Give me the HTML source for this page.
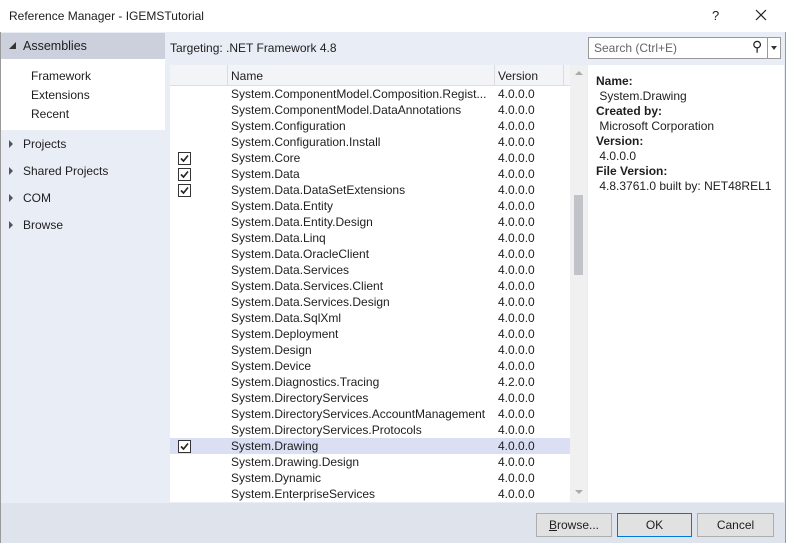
<!DOCTYPE html>
<html><head><style>
body{margin:0;width:786px;height:543px;overflow:hidden;font-family:"Liberation Sans",sans-serif;font-size:12px;color:#1e1e1e;background:#e9edf6;position:relative}
.a{position:absolute}
.title{left:0;top:0;width:786px;height:32px;background:#fff}
.row{position:absolute;left:0;width:400px;height:16px;line-height:16px}
.row span{position:absolute}
.cb{position:absolute;left:8px;top:2px;width:11px;height:11px;border:1px solid #333;background:#fff}
.btn{position:absolute;top:513px;height:22px;border:1px solid #adadad;background:#e1e1e1;text-align:center;line-height:22px;font-size:12px}
.tri{position:absolute;left:9px;width:0;height:0;border-top:4px solid transparent;border-bottom:4px solid transparent;border-left:4px solid #555}
</style></head><body>
<div class="a title"></div>
<div class="a" style="left:9px;top:9px;font-size:12px">Reference Manager - IGEMSTutorial</div>
<div class="a" style="left:712px;top:8px;font-size:13px">?</div>
<svg class="a" style="left:755px;top:9px" width="12" height="12"><path d="M1 1L11 11M11 1L1 11" stroke="#222" stroke-width="1.2"/></svg>
<div class="a" style="left:0;top:32px;width:1px;height:511px;background:#999"></div>
<div class="a" style="left:785px;top:32px;width:1px;height:511px;background:#999"></div>

<div class="a" style="left:1px;top:33px;width:164px;height:26px;background:#ccd0dc"></div>
<div class="a" style="left:9px;top:42px;width:0;height:0;border-left:7px solid transparent;border-bottom:7px solid #333"></div>
<div class="a" style="left:23px;top:39px;font-size:12.5px">Assemblies</div>
<div class="a" style="left:1px;top:59px;width:164px;height:71px;background:#fff"></div>
<div class="a" style="left:31px;top:69px">Framework</div>
<div class="a" style="left:31px;top:88px">Extensions</div>
<div class="a" style="left:31px;top:107px">Recent</div>
<div class="tri" style="top:140px"></div><div class="a" style="left:23px;top:137px">Projects</div>
<div class="tri" style="top:167px"></div><div class="a" style="left:23px;top:164px">Shared Projects</div>
<div class="tri" style="top:194px"></div><div class="a" style="left:23px;top:191px">COM</div>
<div class="tri" style="top:221px"></div><div class="a" style="left:23px;top:218px">Browse</div>

<div class="a" style="left:170px;top:41px">Targeting: .NET Framework 4.8</div>
<div class="a" style="left:588px;top:37px;width:191px;height:20px;border:1px solid #999;background:#fff"></div>
<div class="a" style="left:594px;top:41px;color:#666">Search (Ctrl+E)</div>
<div class="a" style="left:752px;top:38px;font-size:14px;transform:scaleX(-1)">⚲</div>
<div class="a" style="left:767px;top:38px;width:1px;height:20px;background:#999"></div>
<div class="a" style="left:771px;top:46px;border-left:3px solid transparent;border-right:3px solid transparent;border-top:4px solid #333"></div>

<div class="a" style="left:170px;top:65px;width:417px;height:437px;background:#fff;overflow:hidden">
 <div class="a" style="left:0;top:0;width:400px;height:20px;background:#f3f4f7;border-bottom:1px solid #ddd"></div>
 <div class="a" style="left:57px;top:0;width:1px;height:20px;background:#ddd"></div>
 <div class="a" style="left:324px;top:0;width:1px;height:20px;background:#ddd"></div>
 <div class="a" style="left:393px;top:0;width:1px;height:20px;background:#ddd"></div>
 <div class="a" style="left:61px;top:4px">Name</div>
 <div class="a" style="left:328px;top:4px">Version</div>
 <div class="a" style="left:400px;top:0;width:17px;height:437px;background:#f0f0f0"></div>
 <div class="a" style="left:404px;top:130px;width:9px;height:80px;background:#c2c3c9"></div>
 <div class="a" style="left:405px;top:6px;border-left:4px solid transparent;border-right:4px solid transparent;border-bottom:4px solid #aaa"></div>
 <div class="a" style="left:405px;top:425px;border-left:4px solid transparent;border-right:4px solid transparent;border-top:4px solid #aaa"></div>
 <div id="rows"></div>
</div>

<div class="a" style="left:588px;top:65px;width:196px;height:437px;background:#fff"></div>
<div class="a" style="left:596px;top:74px;line-height:15px">
<b>Name:</b><br>&nbsp;System.Drawing<br><b>Created by:</b><br>&nbsp;Microsoft Corporation<br><b>Version:</b><br>&nbsp;4.0.0.0<br><b>File Version:</b><br>&nbsp;4.8.3761.0 built by: NET48REL1</div>

<div class="a" style="left:1px;top:503px;width:784px;height:40px;background:#dfe3ec"></div>
<div class="btn" style="left:536px;width:74px"><u>B</u>rowse...</div>
<div class="btn" style="left:617px;width:73px;border-color:#0078d7">OK</div>
<div class="btn" style="left:697px;width:75px">Cancel</div>

<script>
var n=["System.ComponentModel.Composition.Regist...","System.ComponentModel.DataAnnotations","System.Configuration","System.Configuration.Install","System.Core","System.Data","System.Data.DataSetExtensions","System.Data.Entity","System.Data.Entity.Design","System.Data.Linq","System.Data.OracleClient","System.Data.Services","System.Data.Services.Client","System.Data.Services.Design","System.Data.SqlXml","System.Deployment","System.Design","System.Device","System.Diagnostics.Tracing","System.DirectoryServices","System.DirectoryServices.AccountManagement","System.DirectoryServices.Protocols","System.Drawing","System.Drawing.Design","System.Dynamic","System.EnterpriseServices"];
var h="";n.forEach(function(s,i){var y=21+16*i;var sel=i==22;var ck=(i>=4&&i<=6)||sel;
h+='<div class="row" style="top:'+y+'px;'+(sel?'background:#dadff4':'')+'">'+(ck?'<div class="cb"><svg width="11" height="11" style="position:absolute;left:0;top:0"><path d="M2 5.5L4.5 8L9 2.5" stroke="#222" stroke-width="1.6" fill="none"/></svg></div>':'')+'<span style="left:61px">'+s+'</span><span style="left:328px">'+(i==18?'4.2.0.0':'4.0.0.0')+'</span></div>';});
document.getElementById("rows").innerHTML=h;
</script>
</body></html>
